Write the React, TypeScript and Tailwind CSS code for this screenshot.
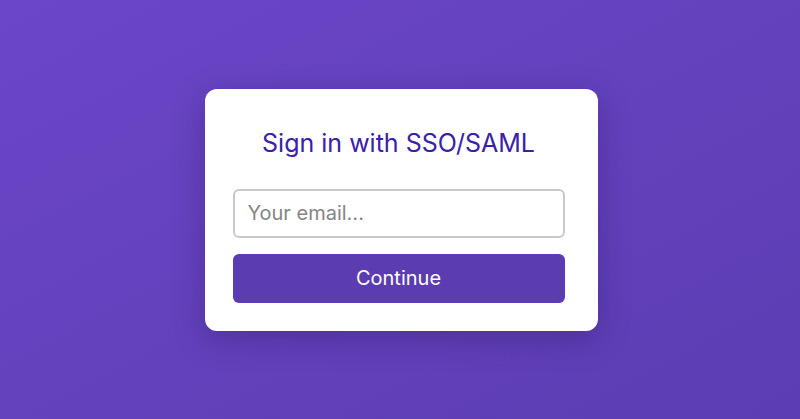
import React from 'react';

const App: React.FC = () => {
  return (
    <div
      className="w-full h-[419px] flex items-center justify-center bg-gradient-to-br from-[#6b46c8] to-[#5c3db2]"
      style={{ fontFamily: 'Inter, "Noto Sans", sans-serif' }}
    >
      <div className="ml-[2px] w-[393px] bg-white rounded-xl shadow-[0_8px_30px_rgba(40,20,90,0.35)] pl-7 pt-[38px] pb-7 flex flex-col items-start">
        <h1 className="w-[332px] text-center text-[25px] leading-8 text-[#3a20ad] font-normal">Sign in with SSO/SAML</h1>
        <input
          type="email"
          placeholder="Your email..."
          className="mt-[30px] w-[332px] h-[49px] border-2 border-[#c9c9c9] rounded-md px-[13px] text-[20px] placeholder-[#858585] text-gray-800 outline-none"
        />
        <button className="mt-4 w-[332px] h-[49px] bg-[#5b3cb1] rounded-md text-white text-[20px]">
          Continue
        </button>
      </div>
    </div>
  );
};

export default App;
